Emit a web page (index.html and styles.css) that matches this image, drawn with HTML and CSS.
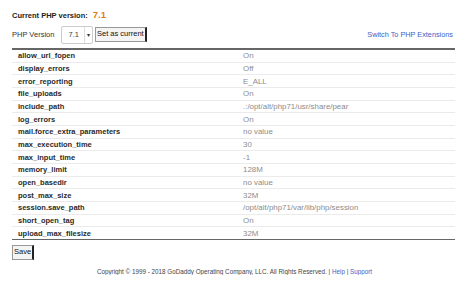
FILE: index.html
```html
<!DOCTYPE html>
<html>
<head>
<meta charset="utf-8">
<link rel="stylesheet" href="styles.css">
</head>
<body>
<div class="page">
  <div class="current">Current PHP version: <span class="ver">7.1</span></div>
  <div class="controls">
    <div class="left">
      <span class="label">PHP Version</span>
      <span class="select">7.1<span class="arrow">&#9662;</span></span>
      <button class="btn">Set as current</button>
    </div>
    <a class="link" href="#">Switch To PHP Extensions</a>
  </div>
  <div class="opts">
    <div class="row"><span class="k">allow_url_fopen</span><span class="v">On</span></div>
    <div class="row"><span class="k">display_errors</span><span class="v">Off</span></div>
    <div class="row"><span class="k">error_reporting</span><span class="v">E_ALL</span></div>
    <div class="row"><span class="k">file_uploads</span><span class="v">On</span></div>
    <div class="row"><span class="k">include_path</span><span class="v">.:/opt/alt/php71/usr/share/pear</span></div>
    <div class="row"><span class="k">log_errors</span><span class="v">On</span></div>
    <div class="row"><span class="k">mail.force_extra_parameters</span><span class="v">no value</span></div>
    <div class="row"><span class="k">max_execution_time</span><span class="v">30</span></div>
    <div class="row"><span class="k">max_input_time</span><span class="v">-1</span></div>
    <div class="row"><span class="k">memory_limit</span><span class="v">128M</span></div>
    <div class="row"><span class="k">open_basedir</span><span class="v">no value</span></div>
    <div class="row"><span class="k">post_max_size</span><span class="v">32M</span></div>
    <div class="row"><span class="k">session.save_path</span><span class="v">/opt/alt/php71/var/lib/php/session</span></div>
    <div class="row"><span class="k">short_open_tag</span><span class="v">On</span></div>
    <div class="row"><span class="k">upload_max_filesize</span><span class="v">32M</span></div>
  </div>
  <button class="btn save">Save</button>
  <div class="footer">Copyright © 1999 - 2018 GoDaddy Operating Company, LLC. All Rights Reserved. | <a href="#">Help</a> | <a href="#">Support</a></div>
</div>
</body>
</html>
```
FILE: styles.css
```css
html, body { margin: 0; padding: 0; background: #fff; }
body { font-family: "Liberation Sans", Arial, sans-serif; color: #222; }
.page { width: 443px; padding: 9px 0 0 12px; }
.current { font-size: 7.5px; font-weight: bold; color: #222; height: 12px; line-height: 12px; }
.current .ver { color: #e07b1a; font-size: 9.5px; margin-left: 3px; }
.controls { display: flex; justify-content: space-between; align-items: center; height: 23px; margin-top: 2px; }
.left { display: flex; align-items: center; }
.label { font-size: 7.5px; color: #333; width: 49px; }
.select { box-sizing: border-box; width: 32px; height: 18px; border: 1px solid #ccc; border-radius: 2px; font-size: 7.5px; color: #444; display: flex; align-items: center; justify-content: flex-end; padding-right: 2px; background: #fff; }
.select .arrow { font-size: 6px; margin-left: 5px; padding-left: 2px; border-left: 1px solid #ddd; color: #333; height: 16px; line-height: 16px; }
.btn { font-family: "Liberation Sans", Arial, sans-serif; font-size: 7.5px; color: #111; background: #f4f4f4; border: 1px solid #999; border-right: 2px solid #222; padding: 1px 1px 2px 1px; margin-left: 2px; line-height: 10px; }
.link { font-size: 7.3px; color: #3a62c9; text-decoration: none; margin-right: 2px; }
.opts { width: 443px; border-top: 2px solid #666; border-bottom: 1px solid #666; margin-top: 2px; }
.row { display: flex; align-items: center; height: 11.67px; border-top: 1px solid #ebebeb; }
.row:first-child { border-top: none; }
.k { font-size: 7.5px; font-weight: bold; color: #2a2a2a; padding-left: 6px; width: 225px; flex: none; }
.v { font-size: 7.9px; color: #8c8c8c; }
.save { margin: 0; }
.footer { font-size: 6.3px; color: #444; text-align: center; margin-top: 8px; margin-right: -2px; }
.footer a { color: #3a62c9; text-decoration: none; }
```
